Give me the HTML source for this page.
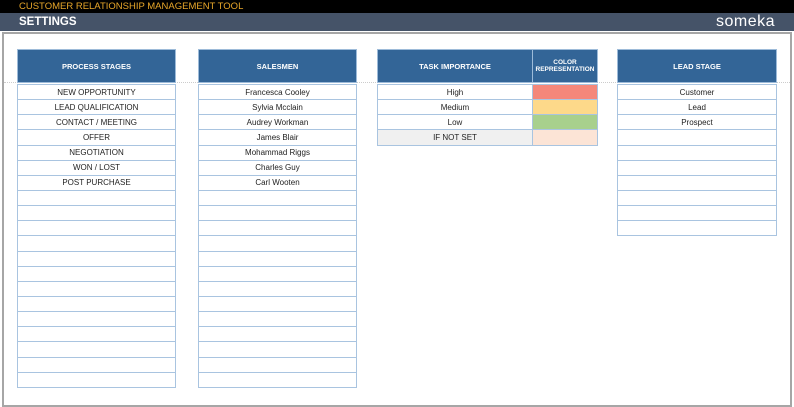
<!DOCTYPE html>
<html><head><style>
*{margin:0;padding:0;box-sizing:border-box}
body{width:794px;height:407px;background:#fff;font-family:"Liberation Sans",sans-serif;position:relative;overflow:hidden}
.top{position:absolute;left:0;top:0;width:794px;height:13px;background:#000;color:#e8a72a;font-size:9.5px;line-height:13px;padding-left:19px}
.bar{position:absolute;left:0;top:13px;width:794px;height:18px;background:#455368;color:#fff;font-weight:bold;font-size:11.5px;line-height:18px;padding-left:19px}
.logo{position:absolute;right:19px;top:13px;color:#fff;font-size:16px;line-height:18px;letter-spacing:0.5px}
.frame{position:absolute;left:2px;top:32px;width:790px;height:375px;border:2px solid #a6a6a6}
.t{position:absolute;border-collapse:collapse;font-size:8px;color:#222;table-layout:fixed}
.t th{background:#336597;color:#fff;font-size:7.5px;height:33px;border:1px solid #9dbbd9;font-weight:bold}
.t td{height:15.15px;border:1px solid #a9c4e0;text-align:center;padding:0}
.gap td{height:2px;border:none}
</style></head><body>
<div class="top">CUSTOMER RELATIONSHIP MANAGEMENT TOOL</div>
<div class="bar">SETTINGS</div>
<div class="logo">someka</div>
<div class="frame"></div>
<div style="position:absolute;left:4px;top:82px;width:786px;border-top:1px dotted #ccc"></div>

<table class="t" style="left:17px;top:49px;width:159px">
<tr><th>PROCESS STAGES</th></tr><tr class="gap"><td></td></tr>
<tr><td>NEW OPPORTUNITY</td></tr><tr><td>LEAD QUALIFICATION</td></tr><tr><td>CONTACT / MEETING</td></tr><tr><td>OFFER</td></tr><tr><td>NEGOTIATION</td></tr><tr><td>WON / LOST</td></tr><tr><td>POST PURCHASE</td></tr>
<tr><td></td></tr><tr><td></td></tr><tr><td></td></tr><tr><td></td></tr><tr><td></td></tr><tr><td></td></tr><tr><td></td></tr><tr><td></td></tr><tr><td></td></tr><tr><td></td></tr><tr><td></td></tr><tr><td></td></tr><tr><td></td></tr>
</table>

<table class="t" style="left:198px;top:49px;width:159px">
<tr><th>SALESMEN</th></tr><tr class="gap"><td></td></tr>
<tr><td>Francesca Cooley</td></tr><tr><td>Sylvia Mcclain</td></tr><tr><td>Audrey Workman</td></tr><tr><td>James Blair</td></tr><tr><td>Mohammad Riggs</td></tr><tr><td>Charles Guy</td></tr><tr><td>Carl Wooten</td></tr>
<tr><td></td></tr><tr><td></td></tr><tr><td></td></tr><tr><td></td></tr><tr><td></td></tr><tr><td></td></tr><tr><td></td></tr><tr><td></td></tr><tr><td></td></tr><tr><td></td></tr><tr><td></td></tr><tr><td></td></tr><tr><td></td></tr>
</table>

<table class="t" style="left:377px;top:49px;width:220px">
<colgroup><col style="width:155px"><col style="width:65px"></colgroup>
<tr><th>TASK IMPORTANCE</th><th style="font-size:6.5px">COLOR<br>REPRESENTATION</th></tr><tr class="gap"><td></td><td></td></tr>
<tr><td>High</td><td style="background:#f4877a"></td></tr>
<tr><td>Medium</td><td style="background:#fdd98a"></td></tr>
<tr><td>Low</td><td style="background:#a8d08d"></td></tr>
<tr><td style="background:#f0f0f0">IF NOT SET</td><td style="background:#fce4d6"></td></tr>
</table>

<table class="t" style="left:617px;top:49px;width:160px">
<tr><th>LEAD STAGE</th></tr><tr class="gap"><td></td></tr>
<tr><td>Customer</td></tr><tr><td>Lead</td></tr><tr><td>Prospect</td></tr>
<tr><td></td></tr><tr><td></td></tr><tr><td></td></tr><tr><td></td></tr><tr><td></td></tr><tr><td></td></tr><tr><td></td></tr>
</table>
</body></html>
